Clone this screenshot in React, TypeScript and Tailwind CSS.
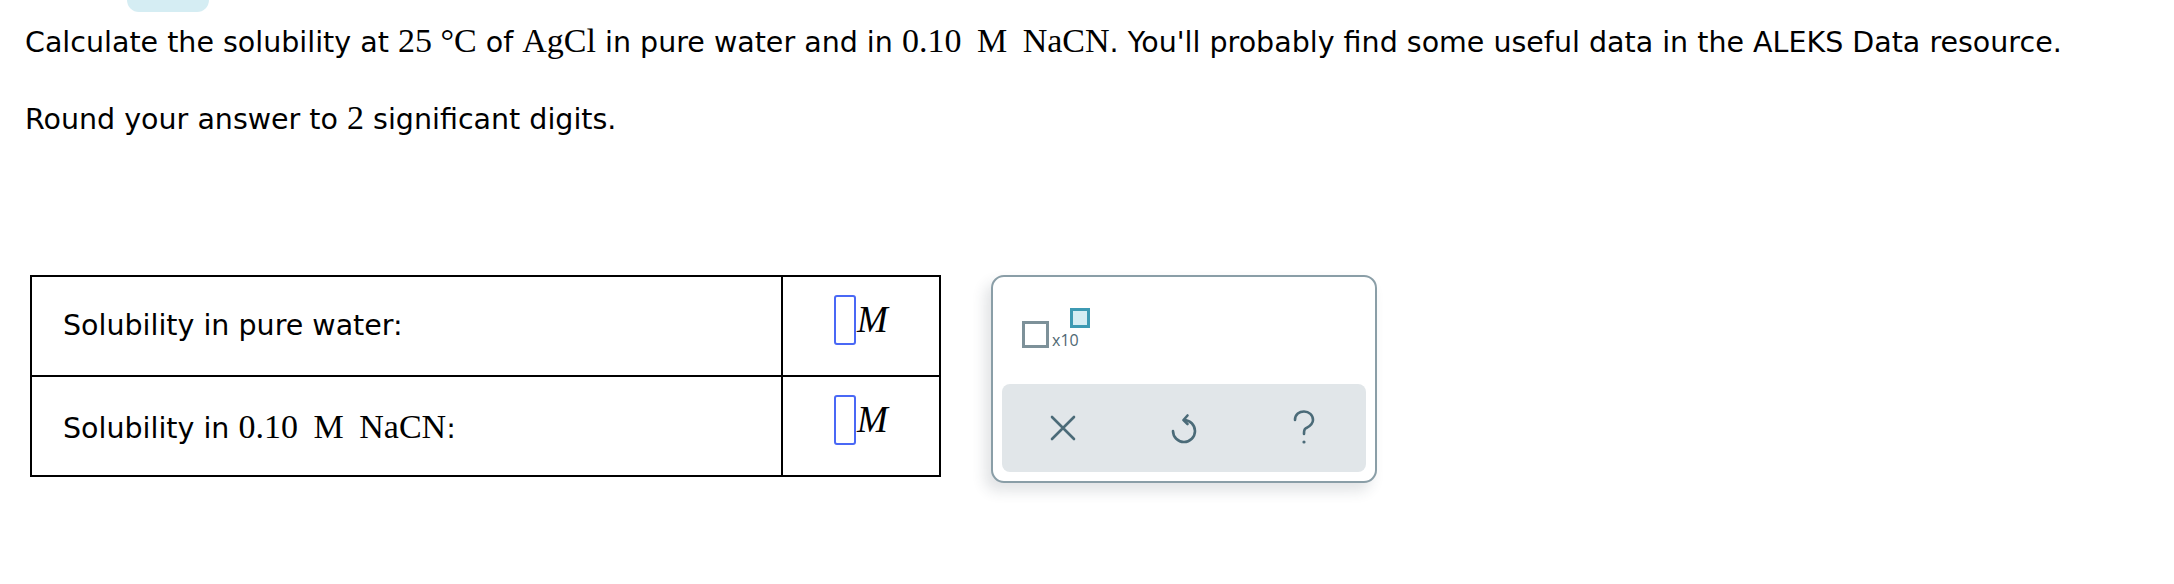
function Math({ children }: { children: React.ReactNode }) {
  return <span className="font-['Liberation_Serif',serif] text-[34px]">{children}</span>
}

function Conc() {
  return (
    <Math>
      0.10 <span className="ml-[7px]">M</span> <span className="ml-[7px]">NaCN</span>
    </Math>
  )
}

function AnswerBox() {
  return (
    <span className="inline-flex items-center">
      <span className="inline-block h-[50px] w-[22px] rounded-[3px] border-2 border-[#4a68f5]" />
      <span className="ml-[1px] font-['Liberation_Serif',serif] text-[37px] italic leading-none">M</span>
    </span>
  )
}

function Keypad() {
  return (
    <div className="ml-[50px] flex h-[208px] w-[386px] flex-col rounded-[13px] border-2 border-[#8a9ea7] bg-white shadow-[-6px_8px_14px_rgba(40,60,70,0.14)]">
      <div className="flex h-[107px] items-start pl-[29px] pt-[31px]">
        <div className="relative flex items-end">
          <span className="mt-[13px] inline-block h-[27px] w-[27px] border-[3px] border-[#7d9199]" />
          <span className="ml-[3px] font-['Open_Sans',sans-serif] text-[16px] leading-none text-[#4e6873]">x10</span>
          <span className="absolute left-[48px] top-0 inline-block h-[20px] w-[20px] border-[3px] border-[#3d9ab3] bg-[#d5edf3]" />
        </div>
      </div>
      <div className="mx-[9px] flex h-[88px] items-center rounded-[8px] bg-[#e1e6e9] text-[#4b6b78]">
        <div className="flex w-[122px] justify-center">
          <svg width="26" height="26" viewBox="0 0 26 26" fill="none" stroke="currentColor" strokeWidth="2.6" strokeLinecap="round">
            <path d="M2 2 L24 24 M24 2 L2 24" />
          </svg>
        </div>
        <div className="flex w-[120px] justify-center">
          <svg width="28" height="32" viewBox="0 0 28 32" fill="none" stroke="currentColor" strokeWidth="2.6" strokeLinecap="round" strokeLinejoin="round">
            <path d="M14 8 A11 11 0 1 1 3 19" />
            <path d="M17.5 3.5 L13.5 8 L17.5 12" />
          </svg>
        </div>
        <div className="flex w-[120px] justify-center">
          <svg width="24" height="36" viewBox="0 0 24 36" fill="none" stroke="currentColor" strokeWidth="2.6" strokeLinecap="round">
            <path d="M3 10 C3 4 7.5 1.5 12 1.5 C17 1.5 21 5 21 10 C21 15 16 17 13 19 C12 20 12 21 12 24" />
            <circle cx="12" cy="32" r="1.6" fill="currentColor" stroke="none" />
          </svg>
        </div>
      </div>
    </div>
  )
}

export default function App() {
  return (
    <div className="h-[584px] w-[2174px] bg-white pl-[25px] font-['DejaVu_Sans',sans-serif] text-[28.5px] text-black">
      <div className="ml-[102px] h-[12px] w-[82px] rounded-b-[12px] bg-[#d5edf3]" />
      <p className="mt-[11px] leading-[36px]">
        Calculate the solubility at <Math>25 °C</Math> of <Math>AgCl</Math> in pure water and in <Conc />. You'll
        probably find some useful data in the ALEKS Data resource.
      </p>
      <p className="mt-[39px] leading-[36px]">
        Round your answer to <Math>2</Math> significant digits.
      </p>
      <div className="mt-[137px] ml-[5px] flex items-start">
        <table className="w-[911px] border-collapse border-2 border-black">
          <tbody>
            <tr className="h-[100px]">
              <td className="w-[751px] border-2 border-black pl-[31px]">Solubility in pure water:</td>
              <td className="border-2 border-black text-center">
                <AnswerBox />
              </td>
            </tr>
            <tr className="h-[100px]">
              <td className="border-2 border-black pl-[31px]">
                Solubility in <Conc />:
              </td>
              <td className="border-2 border-black text-center">
                <AnswerBox />
              </td>
            </tr>
          </tbody>
        </table>
        <Keypad />
      </div>
    </div>
  )
}
